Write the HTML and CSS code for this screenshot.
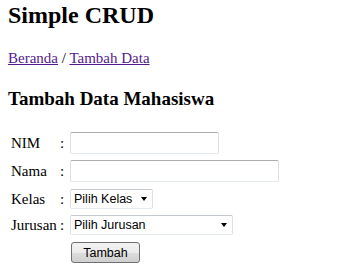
FILE: index.html
```html
<!DOCTYPE html>
<html lang="id">
<head>
    <meta charset="UTF-8">
    <title>Simple CRUD</title>
    <link rel="stylesheet" href="styles.css">
</head>
<body>
    <h2 class="title">Simple CRUD</h2>
    <p class="nav"><a href="#">Beranda</a> / <a href="#">Tambah Data</a></p>

    <h3 class="subtitle">Tambah Data Mahasiswa</h3>

    <form action="#" method="post">
        <table class="form-table">
            <tr>
                <td class="label">NIM</td>
                <td class="colon">:</td>
                <td><input type="text" name="nim" class="txt txt-short"></td>
            </tr>
            <tr>
                <td class="label">Nama</td>
                <td class="colon">:</td>
                <td><input type="text" name="nama" class="txt txt-long"></td>
            </tr>
            <tr class="row-kelas">
                <td class="label">Kelas</td>
                <td class="colon">:</td>
                <td>
                    <span class="select-wrap">
                        <select name="kelas" class="sel sel-kelas">
                            <option>Pilih Kelas</option>
                        </select>
                    </span>
                </td>
            </tr>
            <tr>
                <td class="label">Jurusan</td>
                <td class="colon">:</td>
                <td>
                    <span class="select-wrap">
                        <select name="jurusan" class="sel sel-jurusan">
                            <option>Pilih Jurusan</option>
                        </select>
                    </span>
                </td>
            </tr>
            <tr class="row-button">
                <td></td>
                <td></td>
                <td><button type="submit" class="btn">Tambah</button></td>
            </tr>
        </table>
    </form>
</body>
</html>
```

FILE: styles.css
```css
body {
    margin: 0;
    padding: 2px 8px;
    background: #fff;
    color: #000;
    font-family: "Liberation Serif", "Times New Roman", serif;
    font-size: 15px;
}

.title {
    font-size: 24px;
    font-weight: bold;
    margin: 0 0 21px 0;
}

.nav {
    margin: 0;
}

.nav a {
    color: #551a8b;
}

.subtitle {
    font-size: 19px;
    font-weight: bold;
    margin: 21px 0 19px 0;
}

.form-table {
    border-collapse: collapse;
}

.form-table td {
    padding: 3px 0;
    vertical-align: middle;
}

.form-table td.label {
    padding-left: 3px;
    width: 46px;
}

.form-table td.colon {
    padding-left: 3px;
    width: 10px;
}

.row-kelas td {
    padding-top: 4px;
}

.row-button td {
    padding-top: 4px;
}

/* kotak input gaya windows */
.txt {
    display: block;
    box-sizing: border-box;
    height: 22px;
    margin: 0;
    padding: 1px 3px;
    border: 1px solid #dbdfe6;
    border-top-color: #abadb3;
    border-bottom-color: #e3e9ef;
    border-radius: 2px;
    font-family: "Liberation Sans", Arial, sans-serif;
    font-size: 12.5px;
    outline: none;
}

.txt-short {
    width: 149px;
}

.txt-long {
    width: 209px;
}

.select-wrap {
    position: relative;
    display: inline-block;
    vertical-align: middle;
}

.select-wrap::after {
    content: "";
    position: absolute;
    right: 6px;
    top: 50%;
    margin-top: -2px;
    border-left: 3.5px solid transparent;
    border-right: 3.5px solid transparent;
    border-top: 4px solid #000;
    pointer-events: none;
}

.sel {
    display: block;
    box-sizing: border-box;
    height: 20px;
    margin: 0;
    padding: 0 0 0 3px;
    -webkit-appearance: none;
    appearance: none;
    background: #fff;
    border: 1px solid #dbdfe6;
    border-top-color: #c5c9d0;
    border-bottom-color: #e3e9ef;
    border-radius: 2px;
    color: #000;
    font-family: "Liberation Sans", Arial, sans-serif;
    font-size: 12.5px;
}

.sel-kelas {
    width: 83px;
}

.sel-jurusan {
    width: 163px;
}

.btn {
    display: block;
    box-sizing: border-box;
    width: 69px;
    height: 21px;
    margin: 0 0 0 1px;
    padding: 0;
    border: 1px solid #707070;
    border-radius: 3px;
    background: linear-gradient(#f2f2f2 0%, #ebebeb 50%, #dddddd 51%, #cfcfcf 100%);
    color: #000;
    font-family: "Liberation Sans", Arial, sans-serif;
    font-size: 12.5px;
}
```
